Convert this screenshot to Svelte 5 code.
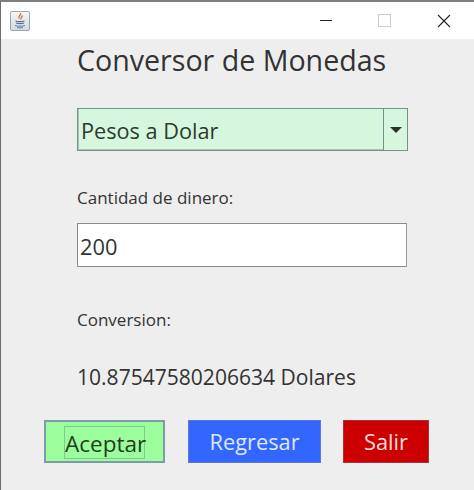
<script>
  let tipo = "Pesos a Dolar";
  let cantidad = "200";
  let resultado = "10.87547580206634";
</script>

<div class="ventana">
  <div class="titlebar">
    <div class="java-icon">
      <svg width="20" height="20" viewBox="0 0 20 20">
        <path d="M10.5 2c1 2-2.5 3-1.5 5.5 M12.5 4.5c-.5 1.500-2 2-1.500 4" fill="none" stroke="#d9772b" stroke-width="1.400" />
        <path d="M5.500 10c2 .8 7 .8 9 0 M6 12c2 .7 6 .7 8 0" fill="none" stroke="#4c6f93" stroke-width="1.200" />
        <path d="M5 14.500c2.500 1 7.500 1 10 0 M7 16.500c2 .5 4.500 .5 6 0" fill="none" stroke="#5b7da0" stroke-width="1" />
      </svg>
    </div>
    <div class="controls">
      <span class="min"></span>
      <span class="max"></span>
      <svg class="close" width="14" height="14" viewBox="0 0 14 14">
        <path d="M1 1l12 12M13 1L1 13" stroke="#222" stroke-width="1.100" fill="none" />
      </svg>
    </div>
  </div>

  <div class="body">
    <h1>Conversor de Monedas</h1>

    <div class="combo">
      <div class="combo-text">{tipo}</div>
      <div class="combo-arrow"><span></span></div>
    </div>

    <div class="label label-cantidad">Cantidad de dinero:</div>
    <div class="campo">{cantidad}</div>

    <div class="label label-conv">Conversion:</div>
    <div class="resultado">{resultado} Dolares</div>

    <div class="botones">
      <button class="aceptar"><span>Aceptar</span></button>
      <button class="regresar">Regresar</button>
      <button class="salir">Salir</button>
    </div>
  </div>
</div>

<style>
  :global(body) {
    margin: 0;
    background: #eeeeee;
  }
  .ventana {
    width: 474px;
    height: 490px;
    box-sizing: border-box;
    border-top: 2px solid #7f7f7f;
    border-left: 1px solid #6d6d6d;
    background: #eeeeee;
    font-family: "Open Sans", "Noto Sans", sans-serif;
    color: #333;
    overflow: hidden;
  }
  .titlebar {
    height: 37px;
    background: #fff;
    display: flex;
    align-items: center;
    justify-content: space-between;
  }
  .java-icon {
    width: 20px;
    height: 20px;
    margin-left: 9px;
    border: 1px solid #9aa5b0;
    border-radius: 2px;
    background: linear-gradient(#f4f6f8, #d3dae1);
    box-sizing: border-box;
  }
  .java-icon svg {
    display: block;
    margin: -1px;
  }
  .controls {
    display: flex;
    align-items: center;
  }
  .min {
    width: 12px;
    height: 1px;
    background: #222;
    margin-right: 46px;
  }
  .max {
    width: 11px;
    height: 11px;
    border: 1px solid #ccc;
    margin-right: 46px;
  }
  .close {
    margin-right: 23px;
  }
  .body {
    padding: 0 0 0 76px;
  }
  h1 {
    margin: 0;
    padding-top: 3px;
    height: 50px;
    font-size: 28.600px;
    line-height: 36px;
    font-weight: 400;
    box-sizing: border-box;
  }
  .combo {
    margin-top: 19px;
    width: 331px;
    height: 43px;
    box-sizing: border-box;
    border: 1px solid #76908a;
    background: #d6f7dd;
    display: flex;
  }
  .combo-text {
    flex: 1;
    padding-left: 2px;
    font-size: 21.700px;
    line-height: 43px;
    color: #2c3a30;
    border-bottom: 1px solid #a9c5b4;
    border-left: 1px solid #a9c5b4;
  }
  .combo-arrow {
    width: 23px;
    border-left: 1px solid #76908a;
    display: flex;
    align-items: center;
    justify-content: center;
  }
  .combo-arrow span {
    width: 0;
    height: 0;
    border-left: 6px solid transparent;
    border-right: 6px solid transparent;
    border-top: 6px solid #2b322d;
  }
  .label {
    font-size: 17px;
    line-height: 20px;
  }
  .label-cantidad {
    margin-top: 37px;
  }
  .campo {
    margin-top: 15px;
    width: 330px;
    height: 44px;
    box-sizing: border-box;
    background: #fff;
    border: 1px solid #8a8a8a;
    border-right-color: #9a9a9a;
    padding-left: 2px;
    font-size: 21.800px;
    line-height: 46px;
  }
  .label-conv {
    margin-top: 43px;
  }
  .resultado {
    margin-top: 34px;
    font-size: 21.050px;
    line-height: 26px;
  }
  .botones {
    margin: 30px 0 0 -33px;
    display: flex;
    align-items: flex-start;
  }
  button {
    height: 43px;
    box-sizing: border-box;
    padding: 0;
    font-family: inherit;
    font-size: 21.800px;
    display: flex;
    align-items: center;
    justify-content: center;
  }
  .aceptar {
    width: 121px;
    background: #9bfd9b;
    border: 2px solid #7c9bab;
    color: #1f3d1f;
    margin-right: 23px;
  }
  .aceptar span {
    display: block;
    width: 81px;
    height: 33px;
    line-height: 33px;
    border: 1px solid #83c98f;
    box-sizing: border-box;
    margin-top: 1px;
    white-space: nowrap;
    font-size: 22.500px;
  }
  .regresar {
    width: 133px;
    background: #3366ff;
    border: 1px solid #5b79cf;
    color: #dfe8ff;
    margin-right: 22px;
  }
  .salir {
    width: 86px;
    background: #cc0000;
    border: 1px solid #a8323f;
    color: #f5dcdc;
  }
</style>
